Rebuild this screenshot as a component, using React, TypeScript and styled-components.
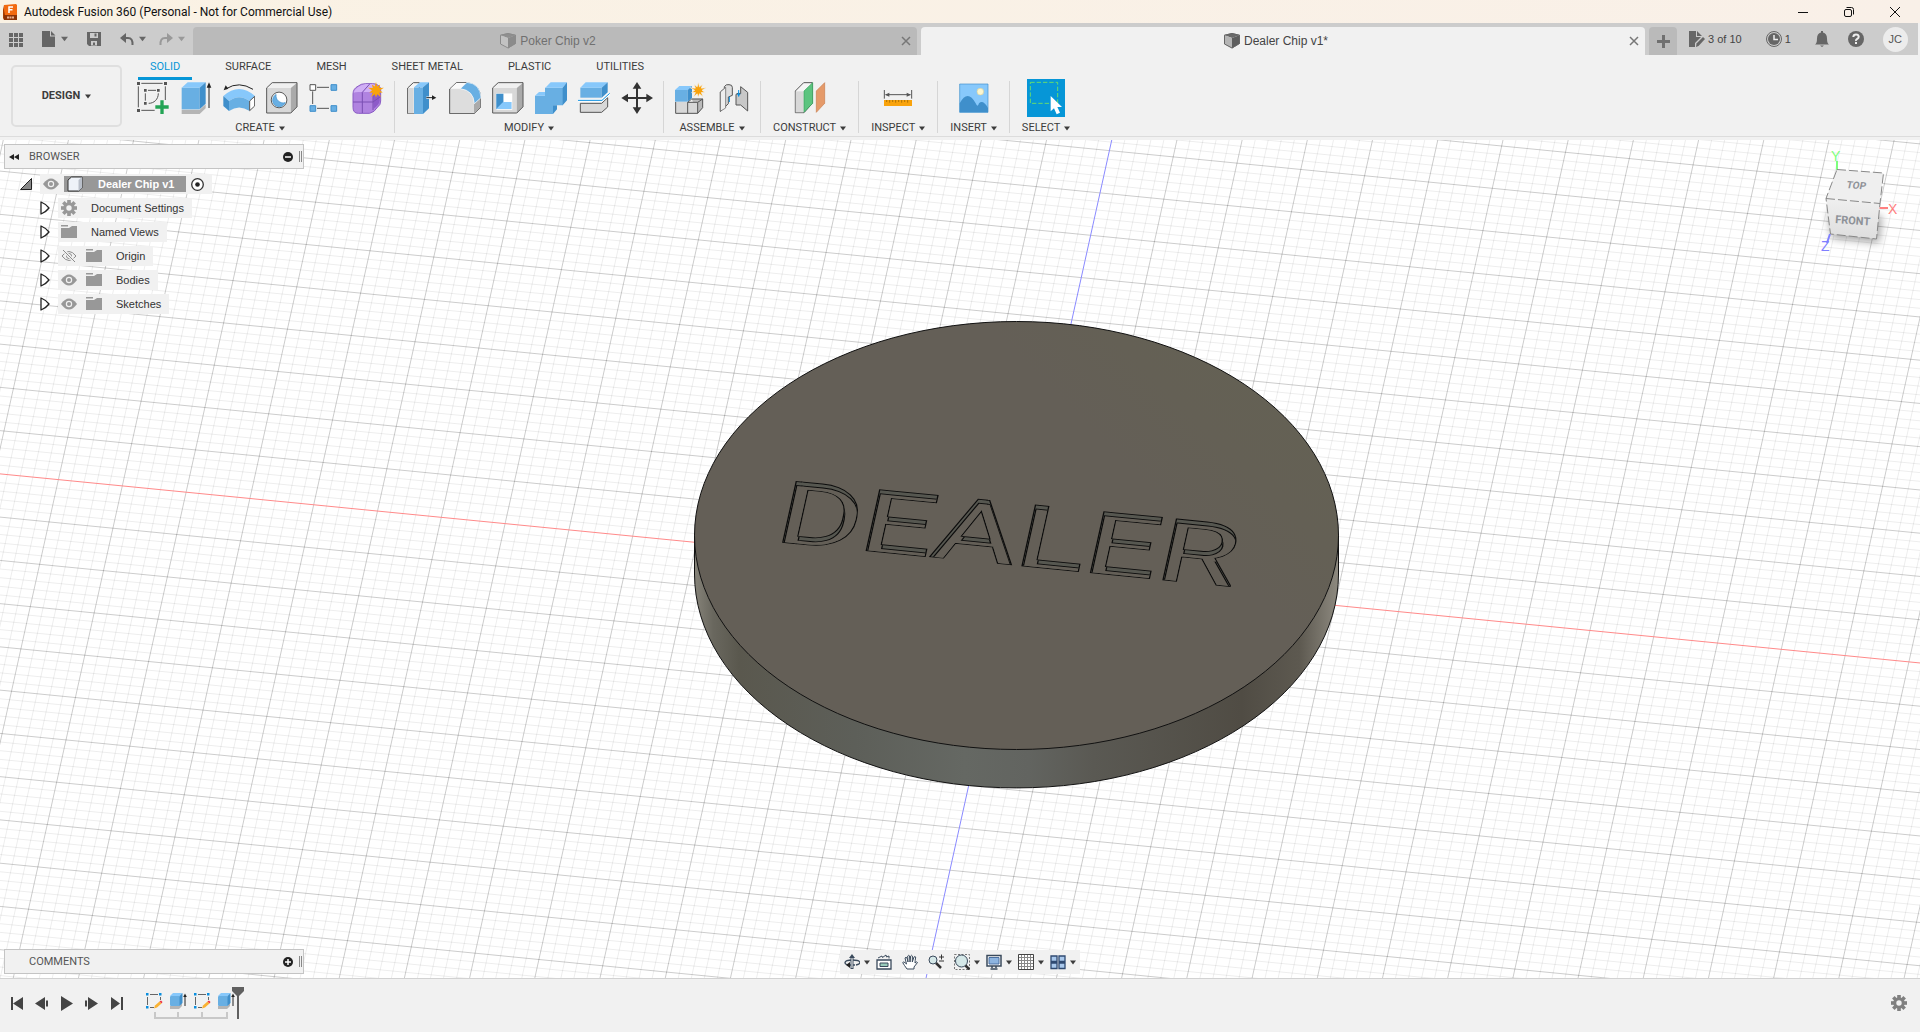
import React from 'react';
import styled, { createGlobalStyle } from 'styled-components';

const GlobalStyle = createGlobalStyle`
  *, *::before, *::after { box-sizing: border-box; }
  body { margin: 0; background: #f1f1f1; }
  button { font: inherit; color: inherit; background: none; border: 0; padding: 0; margin: 0; cursor: default; }
  svg { display: block; flex: none; }
`;

const ui = 'Roboto, "Liberation Sans", sans-serif';
const arial = '"Liberation Sans", Arial, sans-serif';

const Window = styled.div`
  display: flex;
  flex-direction: column;
  height: 100vh;
  overflow: hidden;
  font-family: ${ui};
  font-size: 11px;
  line-height: 16px;
  color: #3c3c3c;
`;

/* ---------- title bar ---------- */
const TitleBar = styled.header`
  display: flex;
  align-items: center;
  flex: none;
  height: 23px;
  padding: 0 2px 0 3px;
  background: linear-gradient(90deg, #faf2e4, #f9f0e8);
`;
const Title = styled.h1`
  flex: 1;
  margin: 0 0 0 7px;
  font: 400 12px/20px ${ui};
  color: #111;
`;
const WindowButton = styled.button`
  display: grid;
  place-items: center;
  width: 46px;
  height: 23px;
`;

/* ---------- document bar ---------- */
const DocBar = styled.div`
  display: flex;
  align-items: stretch;
  flex: none;
  height: 32px;
  padding-top: 4px;
  margin-right: 2px;
  background: #cccccc;
`;
const QuickAccess = styled.nav`
  display: flex;
  align-items: center;
  flex: none;
  width: 193px;
  padding: 0 0 4px 8px;
  color: #666;
`;
const QuickButton = styled.button<{ $gap: number; $dim?: boolean }>`
  display: flex;
  align-items: center;
  gap: 5px;
  margin-right: ${(p) => p.$gap}px;
  color: ${(p) => (p.$dim ? '#999' : '#666')};
`;
const DocTabs = styled.div`
  display: flex;
  flex: 1;
  gap: 4px;
`;
const DocTab = styled.div<{ $active?: boolean }>`
  display: flex;
  align-items: center;
  flex: 1;
  padding: 0 6px 0 2px;
  border-radius: 4px 4px 0 0;
  background: ${(p) => (p.$active ? '#f1f1f1' : '#bababa')};
  color: ${(p) => (p.$active ? '#444' : '#707070')};
  font: 12px/16px ${arial};
`;
const DocTabLabel = styled.button`
  display: flex;
  flex: 1;
  align-items: center;
  justify-content: center;
  gap: 4px;
`;
const CloseButton = styled.button`
  color: #777;
`;
const NewTab = styled.button`
  display: grid;
  place-items: center;
  width: 28px;
  border-radius: 4px 4px 0 0;
  background: #bababa;
  color: #707070;
`;
const AccountArea = styled.div`
  display: flex;
  align-items: center;
  flex: none;
  gap: 19px;
  width: 241px;
  padding: 0 0 4px 12px;
  font-family: ${arial};
  color: #444;
`;
const AccountButton = styled.button<{ $labelled?: boolean }>`
  display: flex;
  align-items: center;
  gap: 3px;
  margin-right: ${(p) => (p.$labelled ? 5 : 0)}px;
`;
const Avatar = styled.button`
  width: 25px;
  height: 25px;
  border-radius: 50%;
  background: #ececec;
  color: #555;
`;

/* ---------- ribbon ---------- */
const Ribbon = styled.div`
  display: flex;
  flex: none;
  height: 82px;
  border-bottom: 1px solid #dcdcdc;
  background: #f1f1f1;
`;
const RibbonEdge = styled.div`
  flex: none;
  height: 3px;
  background: #f1f1f1;
`;
const Workspace = styled.button`
  display: flex;
  align-items: center;
  justify-content: center;
  gap: 5px;
  flex: none;
  width: 111px;
  height: 62px;
  margin: 10px 4px 0 11px;
  border: 2px solid #dfdfdf;
  border-radius: 5px;
  font-weight: 700;
`;
const RibbonMain = styled.div`
  display: flex;
  flex-direction: column;
`;
const RibbonTabs = styled.div`
  display: flex;
  gap: 21px;
  height: 25px;
  padding: 3px 0 0 12px;
`;
const RibbonTab = styled.button<{ $active?: boolean }>`
  height: 22px;
  padding: 0 12px 2px;
  border-bottom: 3px solid ${(p) => (p.$active ? '#0696d7' : 'transparent')};
  color: ${(p) => (p.$active ? '#0696d7' : '#3c3c3c')};
`;
const Groups = styled.div`
  display: flex;
`;
const Group = styled.section`
  display: flex;
  flex-direction: column;
  align-items: center;
  height: 52px;
  margin-top: 1px;
  padding: 0 5px;
  border-right: 1px solid #d6d6d6;
  &:last-child { border-right: 0; }
`;
const Tools = styled.div`
  display: flex;
`;
const Tool = styled.button<{ $selected?: boolean }>`
  display: grid;
  place-items: center;
  width: ${(p) => (p.$selected ? 38 : 43)}px;
  height: 38px;
  margin-top: -2px;
  background: ${(p) => (p.$selected ? '#0696d7' : 'none')};
`;
const GroupMenu = styled.button`
  display: flex;
  align-items: center;
  gap: 4px;
  height: 16px;
  margin-top: 3px;
  padding: 0 7px;
`;

/* ---------- viewport ---------- */
const Viewport = styled.main`
  position: relative;
  flex: 1;
  min-height: 0;
  display: flex;
  flex-direction: column;
  justify-content: space-between;
  background: #fff;
`;
const Scene = styled.svg`
  position: absolute;
  inset: 0;
  width: 100%;
  height: 100%;
`;
const CubeHolder = styled.div`
  position: absolute;
  top: 5px;
  right: 15px;
`;
const Side = styled.aside`
  position: relative;
  width: 300px;
  margin: 4px 0 0 4px;
`;
const Panel = styled.div`
  display: flex;
  align-items: center;
  width: 300px;
  height: 25px;
  padding: 0 1px 0 3px;
  border: 1px solid #c4c4c4;
  background: #f1f1f1;
  color: #555;
`;
const PanelTitle = styled.h2`
  flex: 1;
  margin: 0 0 0 9px;
  font: 400 11px/16px ${ui};
`;
const PanelIcon = styled.span`
  width: 12px;
`;
const Grip = styled.span`
  width: 3px;
  height: 11px;
  margin-left: 6px;
  border: solid #888;
  border-width: 0 1px;
`;
const Tree = styled.ul`
  display: flex;
  flex-direction: column;
  gap: 4px;
  margin: 5px 0 0;
  padding: 0;
  list-style: none;
  font-family: ${arial};
  color: #333;
`;
const Node = styled.li<{ $root?: boolean }>`
  display: flex;
  align-items: center;
  gap: 8px;
  height: 20px;
  padding-left: ${(p) => (p.$root ? 16 : 36)}px;
`;
const NodeBody = styled.div<{ $root?: boolean }>`
  display: flex;
  align-items: center;
  gap: ${(p) => (p.$root ? 5 : 9)}px;
  height: 20px;
  padding: 0 8px 0 3px;
  background: #f1f1f1;
`;
const NodeName = styled.span`
  padding-left: 5px;
`;
const RootName = styled.strong`
  display: flex;
  align-items: center;
  gap: 15px;
  height: 16px;
  padding: 0 12px 0 3px;
  background: #989898;
  color: #fff;
`;
const BottomRow = styled.div`
  position: relative;
  display: grid;
  grid-template-columns: 1fr auto 1fr;
  padding: 0 4px 4px;
`;
const NavBar = styled.nav`
  display: flex;
  align-items: center;
  height: 24px;
  margin-top: 1px;
  padding: 0 4px;
  background: #f1f1f1;
`;
const NavButton = styled.button<{ $gap: number }>`
  display: flex;
  align-items: center;
  gap: 4px;
  margin-right: ${(p) => p.$gap}px;
`;

/* ---------- timeline ---------- */
const Timeline = styled.footer`
  display: flex;
  align-items: center;
  flex: none;
  height: 54px;
  padding: 0 13px 5px 10px;
  border-top: 1px solid #d2d2d2;
  background: #f1f1f1;
`;
const Player = styled.div`
  display: flex;
  gap: 11px;
  margin-right: 22px;
`;
const History = styled.div`
  display: flex;
  flex: 1;
  align-items: flex-start;
`;
const Features = styled.div`
  display: flex;
  flex-direction: column;
  gap: 2px;
  margin-right: -3px;
  padding-top: 6px;
`;
const FeatureRow = styled.div`
  display: flex;
  gap: 7px;
`;

/* ---------- small glyphs ---------- */
const Caret = ({ size = 6 }: { size?: number }) => (
  <svg width={size} height={size - 1} viewBox="0 0 6 5"><path d="M0 .5h6L3 4.5z" fill="currentColor" /></svg>
);
const Svg = ({ vb, w = 32, h = 32, children }: { vb: string; w?: number; h?: number; children: React.ReactNode }) => (
  <svg width={w} height={h} viewBox={vb} fill="none" aria-hidden="true">{children}</svg>
);
const star = (cx: number, cy: number, outer: number, inner: number) =>
  Array.from({ length: 20 }, (_, i) => {
    const a = (Math.PI * i) / 10 - Math.PI / 2;
    const r = i % 2 ? inner : i % 4 === 0 ? outer : outer * 0.85;
    return `${(cx + r * Math.cos(a)).toFixed(1)},${(cy + r * Math.sin(a)).toFixed(1)}`;
  }).join(' ');

const L = '#87c8fb';
const M = '#68afe3';
const D = '#3f8fcb';
const K = '#555';

const icons: Record<string, React.ReactNode> = {
  sketch: (
    <Svg vb="411 246 96 96">
      <path d="M424 250H488M415 259V322M496 259V300M424 331H464M444 271h24M436 280v22M475 280C475 298 462 310 446 310" stroke={K} strokeWidth="3" />
      <path d="M411 246h9v9h-9zM492 246h9v9h-9zM411 327h9v9h-9zM432 267h8v8h-8zM471 267h8v8h-8zM432 306h8v8h-8z" fill={K} />
      <path d="M481 301h10v15h15v10h-15v16h-10v-16h-15v-10h15z" fill="#23a455" />
    </Svg>
  ),
  extrude: (
    <Svg vb="538 246 96 96">
      <path d="M543 329h54l18-16v12l-18 17h-54z" fill="#b5b5b5" />
      <path d="M543 263h54v65h-54z" fill={M} /><path d="M543 263l18-16h54l-18 16z" fill={L} /><path d="M597 263l18-16v64l-18 17z" fill={D} />
      <path d="M625 256v68" stroke="#222" strokeWidth="3" /><path d="M618 263l7-16 7 16z" fill="#222" />
    </Svg>
  ),
  revolve: (
    <Svg vb="668 246 96 96">
      <path d="M669 288Q716 246 764 288L748 303Q716 280 686 303z" fill={L} />
      <path d="M686 303Q716 280 748 303V333Q716 312 686 333z" fill={M} />
      <path d="M669 288l17 15v30l-17-15z" fill={D} />
      <path d="M748 303l15-14v29l-15 14z" fill="#fff" stroke={K} strokeWidth="3" />
      <path d="M678 266Q716 242 758 268" stroke="#222" strokeWidth="3" /><path d="M670 271l6-15 8 10z" fill="#222" />
    </Svg>
  ),
  hole: (
    <Svg vb="798 246 98 98">
      <path d="M800 264h74v77h-74z" fill="#d8d8d8" /><path d="M800 264l17-16h76l-19 16z" fill="#f0f0f0" /><path d="M874 264l19-16v74l-19 19z" fill="#aaa" />
      <path d="M800 264l17-16h76v74l-19 19h-74z" stroke={K} strokeWidth="3" />
      <circle cx="838" cy="301" r="24" fill="#fff" stroke={K} strokeWidth="3" />
      <path d="M829 284A20 20 0 1 0 857 309A22 22 0 0 1 829 284z" fill={M} stroke={D} strokeWidth="2" />
    </Svg>
  ),
  pattern: (
    <Svg vb="926 246 96 96">
      <path d="M950 262h36M937 274v38M950 325h36" stroke={K} strokeWidth="3" />
      <path d="M929 254h17v17h-17z" fill="#fff" stroke={K} strokeWidth="3" />
      <path d="M992 254h17v17h-17zM929 317h17v17h-17zM992 317h17v17h-17z" fill={M} stroke={D} strokeWidth="3" />
    </Svg>
  ),
  form: (
    <Svg vb="1055 246 96 96">
      <path d="M1058 282q0-16 16-24q8-7 22-7h20q18 0 25 14v38q0 12-9 18q-10 16-24 19h-34q-16 0-16-18z" fill="#b083e0" stroke="#8a5cc4" strokeWidth="3" />
      <path d="M1060 278q6-20 36-26h20q10 0 16 8l-18 16h-40q-10 0-14 2z" fill="#d0aff5" />
      <path d="M1118 278l20-16v40q0 10-18 24z" fill="#8d5bc9" />
      <path d="M1058 306h60l22-16M1086 277v62M1086 277l22-25M1118 278v52" stroke="#7a4fb3" strokeWidth="3" />
      <polygon points={star(1127, 271, 25, 12)} fill="#f9a30c" />
    </Svg>
  ),
  press: (
    <Svg vb="48 246 96 96">
      <path d="M53 264l17-16h18v76l-18 17H53z" fill="#f5f5f5" stroke={K} strokeWidth="3" /><path d="M54 264h17v76H54z" fill="#d8d8d8" />
      <path d="M72 262h27v80H72z" fill={M} /><path d="M72 262l18-15h27l-18 15z" fill={L} /><path d="M99 262l18-15v78l-18 17z" fill={D} />
      <path d="M109 293h20" stroke="#fff" strokeWidth="7" /><path d="M109 293h20" stroke="#222" strokeWidth="3" /><path d="M126 286l13 7-13 7z" fill="#222" />
    </Svg>
  ),
  fillet: (
    <Svg vb="177 246 96 96">
      <path d="M179 267l20-19h32q41 6 41 46v28l-20 19h-73z" fill="#ddd" stroke={K} strokeWidth="3" />
      <path d="M181 266l18-17h30l-18 17z" fill="#fafafa" />
      <path d="M252 312l19-17v27l-19 18z" fill="#aaa" />
      <path d="M211 266l20-19q40 4 42 46l-20 18q-2-40-42-45z" fill={M} stroke="#fff" strokeWidth="2" />
    </Svg>
  ),
  shell: (
    <Svg vb="306 246 98 98">
      <path d="M308 264h74v77h-74z" fill="#d8d8d8" /><path d="M308 264l17-16h76l-19 16z" fill="#f0f0f0" /><path d="M382 264l19-16v74l-19 19z" fill="#aaa" />
      <path d="M308 264l17-16h76v74l-19 19h-74z" stroke={K} strokeWidth="3" />
      <path d="M318 281h50v50h-50z" fill="#fff" /><path d="M319 282h22v26l-22 22z" fill={D} /><path d="M319 329l21-22h26v22z" fill={L} />
    </Svg>
  ),
  combine: (
    <Svg vb="435 246 96 96">
      <path d="M435 287h30v-24h54v53h-30v26h-54z" fill={M} />
      <path d="M435 287l12-11h18v11zM466 263l16-16h49l-13 16z" fill={L} />
      <path d="M518 263l13-16v54l-13 15zM489 316h12v12l-12 14z" fill={D} />
    </Svg>
  ),
  split: (
    <Svg vb="564 246 96 96">
      <path d="M571 310h64l18-17v28l-18 16h-64z" fill="#d8d8d8" stroke={K} strokeWidth="3" />
      <path d="M571 263h64v30h-64z" fill={M} /><path d="M571 263l16-16h66l-18 16z" fill={L} /><path d="M635 263l18-16v30l-18 16z" fill={D} />
      <path d="M564 301h72l23-21" stroke="#fff" strokeWidth="8" /><path d="M564 301h72l23-21" stroke="#0a8fe0" strokeWidth="3" />
    </Svg>
  ),
  move: (
    <Svg vb="693 246 96 96">
      <path d="M741 262v64M709 294h64" stroke="#333" strokeWidth="6" />
      <path d="M741 246l13 20h-26zM741 342l13-20h-26zM694 294l20-13v26zM789 294l-20-13v26z" fill="#333" />
    </Svg>
  ),
  component: (
    <Svg vb="855 246 96 96">
      <path d="M857 306h82v16l-16 18h-66z" fill="#d8d8d8" /><path d="M905 296h33v27l-15 17" fill="#bbb" /><path d="M893 306h30v34h-30z" fill="#d8d8d8" />
      <path d="M857 306v34h66l15-17v-26h-33l-12 10h30v33M923 307l15-10M893 307v33" stroke={K} strokeWidth="3" />
      <path d="M855 270h38v35h-38z" fill={M} /><path d="M855 270l13-12h38l-13 12z" fill={L} /><path d="M893 270l13-12v36l-13 11z" fill={D} />
      <polygon points={star(925, 271, 25, 11)} fill="#f9a30c" stroke="#f1f1f1" strokeWidth="2" />
    </Svg>
  ),
  joint: (
    <Svg vb="984 246 96 96">
      <path d="M991 276l12-10v-6q5-8 14-6q10 0 10 8v24l-12 5v20l-24 23z" fill="#ddd" stroke={K} strokeWidth="3" />
      <path d="M1007 262v62l-16 10v-58z" fill="#eee" stroke={K} strokeWidth="2" />
      <path d="M1052 260l21 17v56l-21-18h-14v-32q6-6 14-2z" fill="#c8c8c8" stroke={K} strokeWidth="3" />
      <path d="M1018 290v16M1046 270v20" stroke="#0a8fe0" strokeWidth="3" /><path d="M1040 281h12l-6 8z" fill="#0a8fe0" />
    </Svg>
  ),
  plane: (
    <Svg vb="102 246 96 96">
      <path d="M106 273l25-25h26v62l-25 28h-26z" fill="#f5f5f5" stroke={K} strokeWidth="3" /><path d="M107 274h24v63h-24z" fill="#d8d8d8" />
      <path d="M132 273l26-25v62l-26 27z" fill="#5cc47f" stroke="#35a35c" strokeWidth="2" />
      <path d="M169 273l25-25v62l-25 27z" fill="#e59a69" stroke="#c87b4b" strokeWidth="2" />
    </Svg>
  ),
  measure: (
    <Svg vb="369 246 96 96">
      <path d="M376 270v26M458 270v26M380 284h74" stroke={K} strokeWidth="3" /><path d="M378 284l13-6v12zM456 284l-13-6v12z" fill={K} />
      <path d="M375 300h84v18h-84z" fill="#f9a30c" /><path d="M383 300v6M392 300v8M401 300v6M410 300v8M419 300v6M428 300v8M437 300v6M446 300v8" stroke="#8a5a00" strokeWidth="2" />
    </Svg>
  ),
  image: (
    <Svg vb="590 244 96 96">
      <path d="M595 250h85v85h-85z" fill={L} stroke={D} strokeWidth="2" />
      <path d="M595 308q24-44 48 0q6 14 10 0q12-12 27 14v13h-85z" fill={D} /><circle cx="657" cy="273" r="10" fill="#fbf6d0" stroke="#d8cf9a" strokeWidth="2" />
    </Svg>
  ),
  select: (
    <svg width="38" height="38" viewBox="798 237 114 114" aria-hidden="true">
      <path d="M808 247h82v63h-82z" fill="none" stroke="#67db6f" strokeWidth="3" strokeDasharray="13 6" />
      <path d="M869 288v46l10-9 8 18 10-5-8-17h14z" fill="#fff" />
    </svg>
  ),
};

const groups: { name: string; tools: [string, string][] }[] = [
  { name: 'CREATE', tools: [['sketch', 'Create Sketch'], ['extrude', 'Extrude'], ['revolve', 'Revolve'], ['hole', 'Hole'], ['pattern', 'Rectangular Pattern'], ['form', 'Create Form']] },
  { name: 'MODIFY', tools: [['press', 'Press Pull'], ['fillet', 'Fillet'], ['shell', 'Shell'], ['combine', 'Combine'], ['split', 'Split Body'], ['move', 'Move/Copy']] },
  { name: 'ASSEMBLE', tools: [['component', 'New Component'], ['joint', 'Joint']] },
  { name: 'CONSTRUCT', tools: [['plane', 'Offset Plane']] },
  { name: 'INSPECT', tools: [['measure', 'Measure']] },
  { name: 'INSERT', tools: [['image', 'Canvas']] },
  { name: 'SELECT', tools: [['select', 'Select']] },
];

const PartIcon = ({ dim }: { dim?: boolean }) => (
  <Svg vb="0 0 16 16" w={16} h={16}>
    <path d="M0 2l8-2 8 2-8 3z" fill={dim ? '#8f8f8f' : '#6a6a6a'} /><path d="M0 2l8 3v10.500l-8-4.500z" fill={dim ? '#c2c2c2' : '#b5b5b5'} />
    <path d="M16 2L8 5v10.500l8-5z" fill={dim ? '#8b8b8b' : '#5e5e5e'} /><path d="M.5 2.200L8 .5l7.500 1.700v8.300L8 15l-7.500-4z" stroke={dim ? '#8b8b8b' : '#666'} />
  </Svg>
);
const CloseIcon = () => <Svg vb="0 0 10 10" w={10} h={10}><path d="M1 1l8 8M9 1l-8 8" stroke="currentColor" strokeWidth="1.500" /></Svg>;

const Eye = ({ off }: { off?: boolean }) => (
  <Svg vb="0 0 16 12" w={16} h={12}>
    {off ? (
      <><path d="M1 6q7-9 14 0q-7 9-14 0z" stroke="#8c8c8c" /><circle cx="8" cy="6" r="2.500" stroke="#8c8c8c" /><path d="M2 0l12 12" stroke="#f1f1f1" strokeWidth="3" /><path d="M2 0l12 12" stroke="#8c8c8c" /></>
    ) : (
      <><path d="M0 6q8-11 16 0q-8 11-16 0z" fill="#989898" /><circle cx="8" cy="6" r="3.200" fill="#f1f1f1" /><circle cx="8" cy="6" r="2" fill="#989898" /></>
    )}
  </Svg>
);
const Folder = () => <Svg vb="0 0 16 14" w={16} h={14}><path d="M0 3h8l3-2h5v12H0zM0 0h7v1.500H0z" fill="#989898" /></Svg>;
const gearTeeth = [0, 45, 90, 135, 180, 225, 270, 315];
const Gear = ({ color }: { color: string }) => (
  <Svg vb="-8 -8 16 16" w={16} h={16}>
    {gearTeeth.map((a) => <path key={a} d="M-1.800-8h3.600v4h-3.600z" fill={color} transform={`rotate(${a})`} />)}
    <circle r="4.200" stroke={color} strokeWidth="3" />
  </Svg>
);
const Expander = () => <Svg vb="0 0 10 14" w={10} h={14}><path d="M1 1v12q5-2 8-6q-3-4-8-6z" fill="#fff" stroke="#222" strokeWidth="1.300" strokeLinejoin="round" /></Svg>;

const nodes: { name: string; eye?: 'on' | 'off'; gear?: boolean }[] = [
  { name: 'Document Settings', gear: true },
  { name: 'Named Views' },
  { name: 'Origin', eye: 'off' },
  { name: 'Bodies', eye: 'on' },
  { name: 'Sketches', eye: 'on' },
];

/* ---------- 3D scene: ground grid, axes and the chip ---------- */
const origin = { x: 1015.6, y: 573.9 };
const U = { x: 63.81, y: 6.285 };
const V = { x: -9.38, y: 42.33 };
const STEPS = 5;
const REACH = 20;
const gridPath = (major: boolean) => {
  let d = '';
  for (let i = -REACH * STEPS; i <= REACH * STEPS; i++) {
    if ((i % STEPS === 0) !== major || i === 0) continue;
    const t = i / STEPS;
    const line = (a: typeof U, b: typeof U) => {
      const cx = origin.x + a.x * t;
      const cy = origin.y + a.y * t;
      d += `M${(cx - b.x * REACH).toFixed(1)} ${(cy - b.y * REACH).toFixed(1)}L${(cx + b.x * REACH).toFixed(1)} ${(cy + b.y * REACH).toFixed(1)}`;
    };
    line(U, V);
    line(V, U);
  }
  return d;
};
const axis = (a: typeof U) => `M${origin.x - a.x * REACH} ${origin.y - a.y * REACH}L${origin.x + a.x * REACH} ${origin.y + a.y * REACH}`;

const ChipScene = () => (
  <Scene viewBox="0 140 1920 838" preserveAspectRatio="xMidYMid slice" fill="none" role="img" aria-label="Dealer chip model">
    <defs>
      <linearGradient id="rim" x1="694" x2="1338" gradientUnits="userSpaceOnUse">
        <stop offset="0" stopColor="#87847a" /><stop offset=".03" stopColor="#69675e" /><stop offset=".07" stopColor="#5a584e" />
        <stop offset=".25" stopColor="#5d5f59" /><stop offset=".42" stopColor="#656863" /><stop offset=".52" stopColor="#626460" />
        <stop offset=".62" stopColor="#5a5953" /><stop offset=".85" stopColor="#504c44" /><stop offset=".94" stopColor="#5d5950" /><stop offset="1" stopColor="#8d897f" />
      </linearGradient>
      <linearGradient id="face" x1="1300" y1="400" x2="1180" y2="520" gradientUnits="userSpaceOnUse">
        <stop offset="0" stopColor="#646154" /><stop offset=".5" stopColor="#646055" /><stop offset="1" stopColor="#645f57" />
      </linearGradient>
      <text id="engraving" fontFamily="Roboto, sans-serif" fontSize="128">DEALER</text>
      <clipPath id="pocket"><use href="#engraving" transform="matrix(.9955 .098 -.1463 .6604 773 541)" /></clipPath>
    </defs>
    <path d={gridPath(false)} stroke="#000" strokeOpacity=".07" />
    <path d={gridPath(true)} stroke="#000" strokeOpacity=".2" />
    <path d={axis(U)} stroke="#ff8a8a" />
    <path d={axis(V)} stroke="#8a8aff" />
    <path d="M694.500 535V574A322 214 0 0 0 1338.500 574V535z" fill="url(#rim)" stroke="#111" />
    <ellipse cx="1016.500" cy="535.500" rx="322" ry="214" fill="url(#face)" stroke="#111" />
    <g stroke="#0c0c0c" strokeWidth="2.600" paintOrder="stroke">
      <use href="#engraving" fill="#565750" transform="matrix(.9955 .098 -.1463 .6604 773 541)" />
      <g clipPath="url(#pocket)">
        <use href="#engraving" fill="#645f57" transform="matrix(.9955 .098 -.1463 .6604 773.500 545)" />
      </g>
    </g>
  </Scene>
);

const ViewCube = () => (
  <svg width="90" height="115" viewBox="1815 145 90 115" fill="none" aria-label="View cube">
    <defs>
      <filter id="soft" x="-50%" y="-50%" width="200%" height="200%"><feGaussianBlur stdDeviation="4" /></filter>
      <linearGradient id="cubeFront" x1="0" y1="0" x2="0" y2="1"><stop offset="0" stopColor="#efefef" /><stop offset="1" stopColor="#dedede" /></linearGradient>
    </defs>
    <path d="M1828 212l54 4-3 27-47-5z" fill="#000" opacity=".35" filter="url(#soft)" />
    <path d="M1837 161v9" stroke="#7dff7d" strokeWidth="2" />
    <path d="M1879 208h9" stroke="#ff8080" strokeWidth="2" />
    <path d="M1830 234l-3 9" stroke="#8080ff" strokeWidth="2" />
    <path d="M1837 169.500l46.500 3.500-3.500 30.500-54-5z" fill="#efefef" />
    <path d="M1826 198.500l54 5-3.500 35.500-46-5z" fill="url(#cubeFront)" />
    <path d="M1837 169.500l46.500 3.500-3.500 30.500-3.500 35.500-46-5-4.500-35.500zM1826 198.500l54 5" stroke="#888" strokeDasharray="9 3" />
    <g fontFamily={ui} fontWeight="700" fontSize="11" fill="#8e9298">
      <text transform="translate(1846 188) rotate(4) skewX(-8)" fontSize="10">TOP</text>
      <text transform="translate(1835 223) rotate(4)">FRONT</text>
    </g>
    <g fontFamily={arial} fontSize="14">
      <text x="1831" y="161" fill="#7dff7d">Y</text>
      <text x="1888" y="214" fill="#ff8080">X</text>
      <text x="1821" y="251" fill="#8080ff">Z</text>
    </g>
  </svg>
);

/* ---------- navigation bar ---------- */
const navy = '#3a4a5c';
const navItems: { label: string; menu?: boolean; gap: number; icon: React.ReactNode }[] = [
  { label: 'Orbit', menu: true, gap: 6, icon: <><path d="M12 11q4-1 4-2.500Q15.500 6 8.500 6T1 8.500Q1 11 6 11H11" stroke={navy} strokeWidth="1.300" /><path d="M8 3v12" stroke={navy} strokeWidth="3" /><path d="M8 3v11" stroke="#fff" /><path d="M5 4l3-4 3 4z" fill={navy} /><path d="M6 8v6l-4-3z" fill="#222" /></> },
  { label: 'Look At', gap: 10, icon: <><path d="M1 6h14v9H1z" fill="#fff" stroke={navy} strokeWidth="1.300" /><path d="M4 9h8v3.500H4z" fill="#9cb" stroke={navy} /><path d="M2 4l4-2 .5 1.500L10 1l.5 2L13 2v2.500" stroke={navy} /></> },
  { label: 'Pan', gap: 10, icon: <path d="M5 15Q2 11 .7 8.500Q1.500 7 4.500 10L3 4q1-1.500 2 0l1 4-.3-6q1-1.700 1.800 0L8 8l.7-6q1-1.500 1.700 0L10.300 8l1.700-5q1-1 1.700 0Q13 7 13 9q2-2 2.500-.500L12 13v2z" fill="#fff" stroke={navy} /> },
  { label: 'Zoom', gap: 10, icon: <><circle cx="5" cy="6" r="4" fill="#d5e8e8" stroke={navy} /><path d="M8 9l5 5" stroke="#333" strokeWidth="2.500" /><path d="M11 3h5M13.500 .500v5M11 7h5" stroke="#333" /></> },
  { label: 'Fit', menu: true, gap: 6, icon: <><path d="M.5 .5h15v15H.5z" stroke="#777" strokeDasharray="2 1.500" /><circle cx="7.500" cy="7" r="6" fill="#d5e8e8" stroke={navy} /><path d="M11.500 11.500l4 4" stroke="#333" strokeWidth="2.500" /></> },
  { label: 'Display Settings', menu: true, gap: 6, icon: <><path d="M1 1.500h14v10.500H1z" fill="#fff" stroke={navy} strokeWidth="1.500" /><path d="M3 3.500h10v6.500H3z" fill="#8db4e0" stroke="#4a6fa0" /><path d="M6 12v2M10 12v2M4.500 15h7" stroke={navy} strokeWidth="1.500" /></> },
  { label: 'Grid and Snaps', menu: true, gap: 6, icon: <><path d="M.5 .5h15v15H.5z" fill="#fff" stroke="#444" /><path d="M3.500 1v14M6.500 1v14M9.500 1v14M12.500 1v14M1 3.500h14M1 6.500h14M1 9.500h14M1 12.500h14" stroke="#888" /></> },
  { label: 'Viewports', menu: true, gap: 0, icon: <path d="M1 2h6v5.500H1zM9 2h6v5.500H9zM1 9h6v5.500H1zM9 9h6v5.500H9z" fill="#a9c8ec" stroke="#2f4a72" strokeWidth="1.300" /> },
];

const playerIcons: [string, string][] = [
  ['Go to beginning', 'M1 1h2v13H1zM13 1v13L3 7.500z'],
  ['Step back', 'M10 1v13L0 7.500zM11 4.500h2v6h-2z'],
  ['Play', 'M1 0v15l12-7.500z'],
  ['Step forward', 'M3 1v13l10-6.500zM0 4.500h2v6H0z'],
  ['Go to end', 'M1 1v13l9-6.500zM11 1h2v13h-2z'],
];

const SketchFeature = () => (
  <Svg vb="0 0 17 17" w={17} h={17}>
    <path d="M4 1.500h8M1.500 4v8M14.500 4v3M4 14.500h4" stroke="#666" />
    <path d="M0 0h2.500v2.500H0zM13 0h2.500v2.500H13zM0 13h2.500v2.500H0z" fill="#0a8fe0" />
    <path d="M8 15.500l1-3 4.500-4 2 2-4.500 4z" fill="#f9b233" /><path d="M13.500 8.500l1.500-1 1.500 1.500-1 1.500z" fill="#e34" />
  </Svg>
);
const ExtrudeFeature = () => (
  <Svg vb="0 0 17 17" w={17} h={17}>
    <path d="M0 13h9l3-3v3l-3 3H0z" fill="#b5b5b5" />
    <rect y="3" width="10" height="10" rx="1" fill={M} /><path d="M0 3l3-3h9.500L9.500 3z" fill={L} /><path d="M9.500 3l3-3v10l-3 3z" fill={D} />
    <path d="M15 3v10" stroke="#222" /><path d="M13.200 4L15 .5 16.800 4z" fill="#222" />
  </Svg>
);

export default function App() {
  return (
    <Window>
      <GlobalStyle />
      <TitleBar>
        <Svg vb="0 0 14 16" w={14} h={16}>
          <path d="M1 1l12-1 1 1v14l-1 1H1z" fill="#f26a10" /><path d="M0 1l2 10v5H1l-1-2z" fill="#a63c00" /><path d="M1 11h13v5H1z" fill="#8a3206" />
          <path d="M6 9V3h4M6 5.700h3.500" stroke="#fff" strokeWidth="1.500" /><path d="M4 13.500h7" stroke="#e8b090" strokeDasharray="2 .5" strokeWidth="2" />
        </Svg>
        <Title>Autodesk Fusion 360 (Personal - Not for Commercial Use)</Title>
        <WindowButton aria-label="Minimize"><Svg vb="0 0 10 10" w={10} h={10}><path d="M0 5.500h10" stroke="#111" /></Svg></WindowButton>
        <WindowButton aria-label="Restore"><Svg vb="0 0 10 10" w={10} h={10}><rect x=".5" y="2.500" width="7" height="7" rx="1.500" stroke="#111" /><path d="M2.500 .500h5q2 0 2 2v5" stroke="#111" /></Svg></WindowButton>
        <WindowButton aria-label="Close"><Svg vb="0 0 10 10" w={10} h={10}><path d="M0 0l10 10M10 0L0 10" stroke="#111" /></Svg></WindowButton>
      </TitleBar>

      <DocBar>
        <QuickAccess aria-label="Quick access">
          <QuickButton $gap={19} aria-label="Data panel">
            <Svg vb="0 0 15 15" w={15} h={15}><path d="M1 1h4v4H1zM6 1h4v4H6zM11 1h4v4h-4zM1 6h4v4H1zM6 6h4v4H6zM11 6h4v4h-4zM1 11h4v4H1zM6 11h4v4H6zM11 11h4v4h-4z" fill="currentColor" /></Svg>
          </QuickButton>
          <QuickButton $gap={19} aria-label="File"><Svg vb="0 0 14 16" w={14} h={16}><path d="M0 0h8v5.500h5V16H0zM9 0l4.500 4.500H9z" fill="currentColor" /></Svg><Caret size={7} /></QuickButton>
          <QuickButton $gap={19} aria-label="Save">
            <Svg vb="0 0 14 14" w={14} h={14}><path d="M0 0h14v14H2l-2-2zM3 1v5h8V1zM4 9v4.500h6V9z" fill="currentColor" fillRule="evenodd" /><path d="M7.500 1.500h2v3h-2zM6 10.500h2v2.500H6z" fill="currentColor" /></Svg>
          </QuickButton>
          <QuickButton $gap={13} aria-label="Undo"><Svg vb="0 0 14 13" w={14} h={13}><path d="M2 5h6q5 0 4.500 7" stroke="currentColor" strokeWidth="2" /><path d="M6 0v10L0 5z" fill="currentColor" /></Svg><Caret size={7} /></QuickButton>
          <QuickButton $gap={0} $dim aria-label="Redo"><Svg vb="0 0 14 13" w={14} h={13}><path d="M12 5H6q-5 0-4.500 7" stroke="currentColor" strokeWidth="2" /><path d="M8 0v10l6-5z" fill="currentColor" /></Svg><Caret size={7} /></QuickButton>
        </QuickAccess>
        <DocTabs>
          <DocTab>
            <DocTabLabel><PartIcon dim />Poker Chip v2</DocTabLabel>
            <CloseButton aria-label="Close Poker Chip v2"><CloseIcon /></CloseButton>
          </DocTab>
          <DocTab $active>
            <DocTabLabel><PartIcon />Dealer Chip v1*</DocTabLabel>
            <CloseButton aria-label="Close Dealer Chip v1"><CloseIcon /></CloseButton>
          </DocTab>
          <NewTab aria-label="New design"><Svg vb="0 0 13 13" w={13} h={13}><path d="M6.500 0v13M0 6.500h13" stroke="currentColor" strokeWidth="3" /></Svg></NewTab>
        </DocTabs>
        <AccountArea>
          <AccountButton $labelled>
            <Svg vb="0 0 16 16" w={16} h={16}><path d="M0 0h7v6h5L6 12v4H0zM8 0l5 5H8z" fill="#666" /><path d="M7 16l.5-3.500L14 6l2 2-6.500 7z" fill="#666" /></Svg>
            3 of 10
          </AccountButton>
          <AccountButton $labelled>
            <Svg vb="0 0 16 16" w={16} h={16}><circle cx="8" cy="8" r="7.500" stroke="#666" /><circle cx="8" cy="8" r="6" fill="#666" /><path d="M8 4v4.500h4" stroke="#eee" strokeWidth="1.500" /></Svg>
            1
          </AccountButton>
          <AccountButton aria-label="Notifications">
            <Svg vb="0 0 14 16" w={14} h={16}><path d="M6 0h2v1.500q4 1 4 6t2 6H0q2-1 2-6t4-6zM5 14.500h4L7 16z" fill="#666" /></Svg>
          </AccountButton>
          <AccountButton aria-label="Help">
            <Svg vb="0 0 16 16" w={16} h={16}><circle cx="8" cy="8" r="8" fill="#666" /><path d="M5.300 6q.2-2.500 2.700-2.500t2.700 2.200q0 1.200-1.500 2.200T8 10" stroke="#eee" strokeWidth="2" /><path d="M7 11h2v2H7z" fill="#eee" /></Svg>
          </AccountButton>
          <Avatar>JC</Avatar>
        </AccountArea>
      </DocBar>

      <Ribbon>
        <Workspace>DESIGN <Caret /></Workspace>
        <RibbonMain>
          <RibbonTabs>
            <RibbonTab $active>SOLID</RibbonTab>
            {['SURFACE', 'MESH', 'SHEET METAL', 'PLASTIC', 'UTILITIES'].map((t) => <RibbonTab key={t}>{t}</RibbonTab>)}
          </RibbonTabs>
          <Groups>
            {groups.map((g) => (
              <Group key={g.name}>
                <Tools>
                  {g.tools.map(([id, label]) => <Tool key={id} aria-label={label} $selected={id === 'select'}>{icons[id]}</Tool>)}
                </Tools>
                <GroupMenu>{g.name} <Caret /></GroupMenu>
              </Group>
            ))}
          </Groups>
        </RibbonMain>
      </Ribbon>
      <RibbonEdge />

      <Viewport>
        <ChipScene />
        <CubeHolder><ViewCube /></CubeHolder>
        <Side>
          <Panel>
            <Svg vb="0 0 12 8" w={12} h={8}><path d="M6 1v6L1 4zM11 1v6L6 4z" fill="#222" /></Svg>
            <PanelTitle>BROWSER</PanelTitle>
            <Svg vb="0 0 10 10" w={10} h={10}><circle cx="5" cy="5" r="5" fill="#222" /><path d="M2 5h6" stroke="#fff" strokeWidth="1.500" /></Svg>
            <Grip />
          </Panel>
          <Tree>
            <Node $root>
              <Svg vb="0 0 12 12" w={12} h={12}><path d="M.500 11.500L11.500 .500v11z" fill="#888" stroke="#222" /></Svg>
              <NodeBody $root>
                <Eye />
                <RootName>
                  <Svg vb="0 0 16 16" w={16} h={16}><path d="M1 4l3.500-3H15v11l-3.500 3H1z" fill="#eef2f8" stroke="#333" strokeLinejoin="round" /><path d="M11.500 4L15 1v11l-3.500 3z" fill="#b9bfc9" /></Svg>
                  Dealer Chip v1
                </RootName>
                <Svg vb="0 0 13 13" w={13} h={13}><circle cx="6.500" cy="6.500" r="5.800" fill="#fff" stroke="#333" strokeWidth="1.300" /><circle cx="6.500" cy="6.500" r="2.300" fill="#222" /></Svg>
              </NodeBody>
            </Node>
            {nodes.map((n) => (
              <Node key={n.name}>
                <Expander />
                <NodeBody>
                  {n.eye && <Eye off={n.eye === 'off'} />}
                  {n.gear ? <Gear color="#989898" /> : <Folder />}
                  <NodeName>{n.name}</NodeName>
                </NodeBody>
              </Node>
            ))}
          </Tree>
        </Side>

        <BottomRow>
          <Panel>
            <PanelIcon />
            <PanelTitle>COMMENTS</PanelTitle>
            <Svg vb="0 0 10 10" w={10} h={10}><circle cx="5" cy="5" r="5" fill="#222" /><path d="M2 5h6M5 2v6" stroke="#fff" strokeWidth="1.500" /></Svg>
            <Grip />
          </Panel>
          <NavBar aria-label="Navigation">
            {navItems.map((n) => (
              <NavButton key={n.label} aria-label={n.label} $gap={n.gap}>
                <Svg vb="0 0 16 16" w={16} h={16}>{n.icon}</Svg>
                {n.menu && <Caret />}
              </NavButton>
            ))}
          </NavBar>
        </BottomRow>
      </Viewport>

      <Timeline>
        <Player>
          {playerIcons.map(([label, d]) => (
            <button key={label} aria-label={label}><Svg vb="0 0 14 15" w={14} h={15}><path d={d} fill="#444" /></Svg></button>
          ))}
        </Player>
        <History>
          <Features>
            <FeatureRow><SketchFeature /><ExtrudeFeature /><SketchFeature /><ExtrudeFeature /></FeatureRow>
            <Svg vb="0 0 88 8" w={88} h={8}><path d="M9 0v6h72V0M32 0v6M56 0v6" stroke="#c8c8c8" strokeWidth="2" /></Svg>
          </Features>
          <Svg vb="0 0 12 32" w={12} h={32}><path d="M0 0h12v4L7 9v23H5V9L0 4z" fill="#606060" /></Svg>
        </History>
        <button aria-label="Timeline settings"><Gear color="#808080" /></button>
      </Timeline>
    </Window>
  );
}
